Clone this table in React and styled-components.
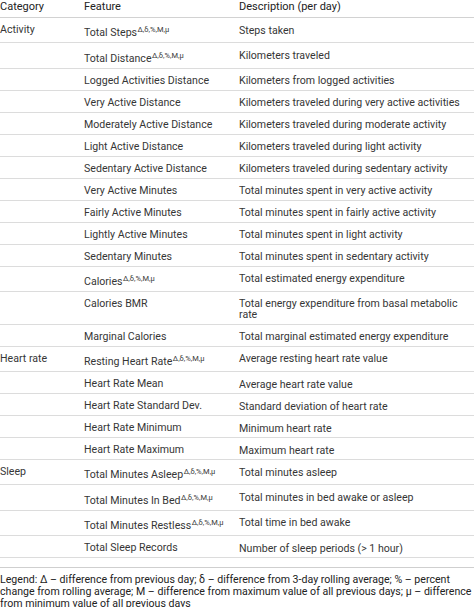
import React from 'react';
import styled, { createGlobalStyle } from 'styled-components';

const GlobalStyle = createGlobalStyle`
  html, body {
    margin: 0;
    padding: 0;
    background: #ffffff;
    overflow: hidden;
  }
  body {
    font-family: Roboto, 'Liberation Sans', Arial, sans-serif;
    color: #363636;
  }
`;

const SUP = 'Δ,δ,%,M,μ';

const rows = [
  { cat: 'Activity', feat: 'Total Steps', sup: true, desc: 'Steps taken' },
  { feat: 'Total Distance', sup: true, desc: 'Kilometers traveled' },
  { feat: 'Logged Activities Distance', desc: 'Kilometers from logged activities' },
  { feat: 'Very Active Distance', desc: 'Kilometers traveled during very active activities' },
  { feat: 'Moderately Active Distance', desc: 'Kilometers traveled during moderate activity' },
  { feat: 'Light Active Distance', desc: 'Kilometers traveled during light activity' },
  { feat: 'Sedentary Active Distance', desc: 'Kilometers traveled during sedentary activity' },
  { feat: 'Very Active Minutes', desc: 'Total minutes spent in very active activity' },
  { feat: 'Fairly Active Minutes', desc: 'Total minutes spent in fairly active activity' },
  { feat: 'Lightly Active Minutes', desc: 'Total minutes spent in light activity' },
  { feat: 'Sedentary Minutes', desc: 'Total minutes spent in sedentary activity' },
  { feat: 'Calories', sup: true, desc: 'Total estimated energy expenditure' },
  { feat: 'Calories BMR', desc: 'Total energy expenditure from basal metabolic rate' },
  { feat: 'Marginal Calories', desc: 'Total marginal estimated energy expenditure' },
  { cat: 'Heart rate', feat: 'Resting Heart Rate', sup: true, desc: 'Average resting heart rate value' },
  { feat: 'Heart Rate Mean', desc: 'Average heart rate value' },
  { feat: 'Heart Rate Standard Dev.', desc: 'Standard deviation of heart rate' },
  { feat: 'Heart Rate Minimum', desc: 'Minimum heart rate' },
  { feat: 'Heart Rate Maximum', desc: 'Maximum heart rate' },
  { cat: 'Sleep', feat: 'Total Minutes Asleep', sup: true, desc: 'Total minutes asleep' },
  { feat: 'Total Minutes In Bed', sup: true, desc: 'Total minutes in bed awake or asleep' },
  { feat: 'Total Minutes Restless', sup: true, desc: 'Total time in bed awake' },
  { feat: 'Total Sleep Records', desc: 'Number of sleep periods (> 1 hour)' },
];

const App = () => (
  <>
    <GlobalStyle />
    <Page>
      <Table>
        <colgroup>
          <col style={{ width: 84 }} />
          <col style={{ width: 155 }} />
          <col />
        </colgroup>
        <thead>
          <tr>
            <Head>Category</Head>
            <Head>Feature</Head>
            <Head>Description (per day)</Head>
          </tr>
        </thead>
        <tbody>
          {rows.map((r) => (
            <Row key={r.feat}>
              <Cell>{r.cat || ''}</Cell>
              <Cell raised={r.sup}>
                {r.feat}
                {r.sup && <Sup>{SUP}</Sup>}
              </Cell>
              <Cell>{r.desc}</Cell>
            </Row>
          ))}
          <Spacer>
            <td colSpan={3} />
          </Spacer>
        </tbody>
      </Table>
      <Legend>
        Legend: Δ – difference from previous day; δ – difference from 3-day
        rolling average; % – percent change from rolling average; M –
        difference from maximum value of all previous days; μ – difference
        from minimum value of all previous days
      </Legend>
    </Page>
  </>
);

const Page = styled.div`
  width: 474px;
`;

const Table = styled.table`
  width: 474px;
  border-collapse: collapse;
  table-layout: fixed;
  font-size: 10.6px;
  line-height: 10px;
`;

const Head = styled.th`
  text-align: left;
  font-weight: 400;
  font-size: 11px;
  color: #222;
  padding: 2px 0 5px 0;
  border-bottom: 1px solid #d2d2d2;
  vertical-align: top;
`;

const Row = styled.tr`
  border-bottom: 1px solid #dcdcdc;
`;

const Cell = styled.td`
  padding: ${(props) => (props.raised ? '10.3px 0 4px 0' : '7px 0 4px 0')};
  vertical-align: top;
  white-space: nowrap;
  &:last-child {
    white-space: normal;
    line-height: 11px;
    padding-top: 6.5px;
    padding-bottom: 3.5px;
  }
`;

const Sup = styled.sup`
  font-size: 7.5px;
  line-height: 0;
  vertical-align: baseline;
  position: relative;
  top: -4px;
  margin-left: 0.5px;
`;

const Spacer = styled.tr`
  height: 10px;
  border-bottom: 1px solid #cfcfcf;
`;

const Legend = styled.p`
  margin: 6px 0 0 0;
  font-size: 10.6px;
  line-height: 12px;
  color: #222;
`;

export default App;
